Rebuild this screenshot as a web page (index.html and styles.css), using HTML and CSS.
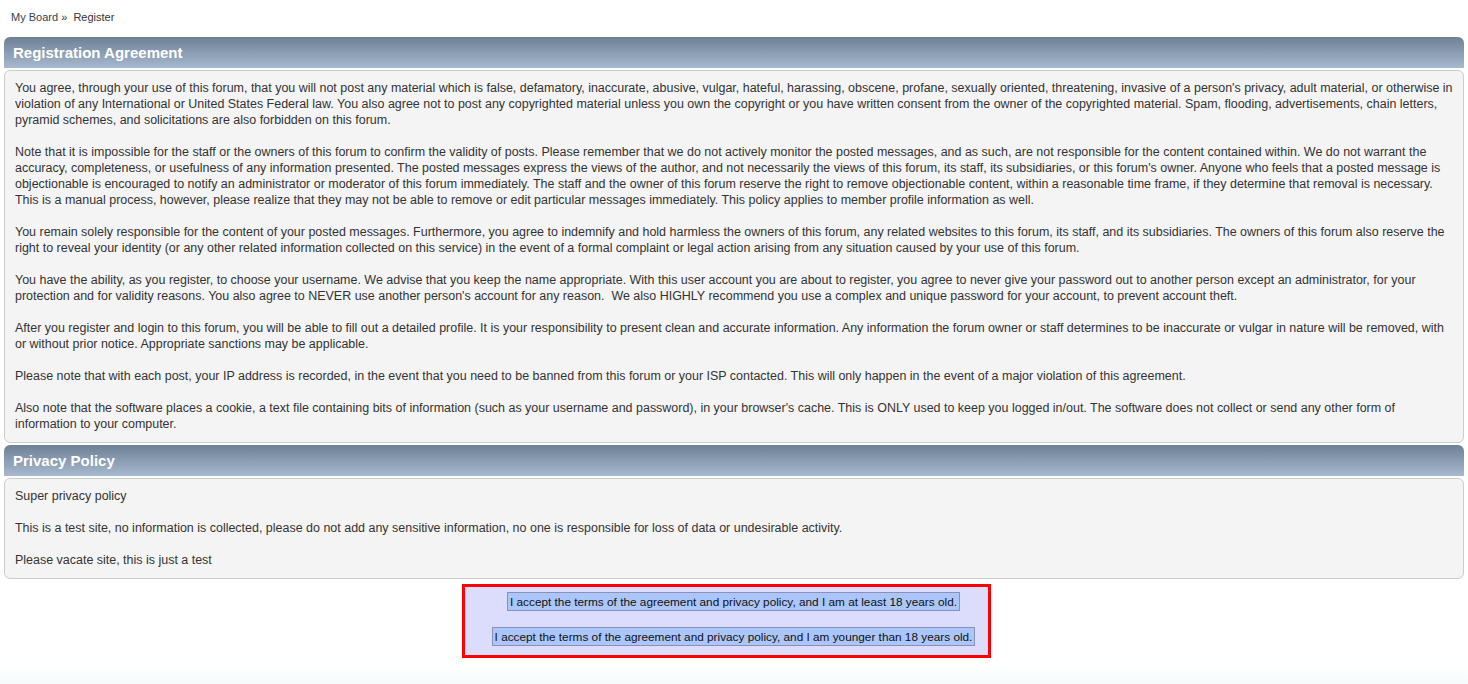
FILE: index.html
```html
<!doctype html>
<html>
  <head>
    <link rel="stylesheet" href="styles.css">
  </head>
  <body>
    <div class="navigation">
      <a href="#">My Board</a> &raquo;&nbsp; <span class="active">Register</span>
    </div>

    <div class="panel">
      <div class="thead">Registration Agreement</div>
      <div class="trow">
        You agree, through your use of this forum, that you will not post any material which is false, defamatory, inaccurate, abusive, vulgar, hateful, harassing, obscene, profane, sexually oriented, threatening, invasive of a person's privacy, adult material, or otherwise in violation of any International or United States Federal law. You also agree not to post any copyrighted material unless you own the copyright or you have written consent from the owner of the copyrighted material. Spam, flooding, advertisements, chain letters, pyramid schemes, and solicitations are also forbidden on this forum.<br><br>
        Note that it is impossible for the staff or the owners of this forum to confirm the validity of posts. Please remember that we do not actively monitor the posted messages, and as such, are not responsible for the content contained within. We do not warrant the accuracy, completeness, or usefulness of any information presented. The posted messages express the views of the author, and not necessarily the views of this forum, its staff, its subsidiaries, or this forum's owner. Anyone who feels that a posted message is objectionable is encouraged to notify an administrator or moderator of this forum immediately. The staff and the owner of this forum reserve the right to remove objectionable content, within a reasonable time frame, if they determine that removal is necessary. This is a manual process, however, please realize that they may not be able to remove or edit particular messages immediately. This policy applies to member profile information as well.<br><br>
        You remain solely responsible for the content of your posted messages. Furthermore, you agree to indemnify and hold harmless the owners of this forum, any related websites to this forum, its staff, and its subsidiaries. The owners of this forum also reserve the right to reveal your identity (or any other related information collected on this service) in the event of a formal complaint or legal action arising from any situation caused by your use of this forum.<br><br>
        You have the ability, as you register, to choose your username. We advise that you keep the name appropriate. With this user account you are about to register, you agree to never give your password out to another person except an administrator, for your protection and for validity reasons. You also agree to NEVER use another person's account for any reason.&nbsp; We also HIGHLY recommend you use a complex and unique password for your account, to prevent account theft.<br><br>
        After you register and login to this forum, you will be able to fill out a detailed profile. It is your responsibility to present clean and accurate information. Any information the forum owner or staff determines to be inaccurate or vulgar in nature will be removed, with or without prior notice. Appropriate sanctions may be applicable.<br><br>
        Please note that with each post, your IP address is recorded, in the event that you need to be banned from this forum or your ISP contacted. This will only happen in the event of a major violation of this agreement.<br><br>
        Also note that the software places a cookie, a text file containing bits of information (such as your username and password), in your browser's cache. This is ONLY used to keep you logged in/out. The software does not collect or send any other form of information to your computer.
      </div>
    </div>

    <div class="panel">
      <div class="thead">Privacy Policy</div>
      <div class="trow">
        Super privacy policy<br><br>
        This is a test site, no information is collected, please do not add any sensitive information, no one is responsible for loss of data or undesirable activity.<br><br>
        Please vacate site, this is just a test
      </div>
    </div>

    <div class="agree">
      <form class="agree-form">
        <input type="submit" class="button" value="I accept the terms of the agreement and privacy policy, and I am at least 18 years old.">
        <input type="submit" class="button" value="I accept the terms of the agreement and privacy policy, and I am younger than 18 years old.">
      </form>
    </div>
  </body>
</html>
```

FILE: styles.css
```css
html {
  min-height: 100%;
  background: linear-gradient(#fff 660px, #f8fbfb 684px);
}

body {
  margin: 0;
  padding: 0 4px;
  font-family: "Liberation Sans", Arial, sans-serif;
  font-size: 12.47px;
  color: #333;
}

.navigation {
  font-size: 11px;
  padding: 11px 0 0 7px;
  height: 37px;
  box-sizing: border-box;
  color: #333;
}

.navigation a {
  color: #334455;
  text-decoration: none;
}

.panel {
  margin-bottom: 2px;
}

.thead {
  height: 31px;
  line-height: 31px;
  padding-left: 9px;
  background: linear-gradient(#6e8096, #a7b9cf);
  border-radius: 6px 6px 0 0;
  color: #fff;
  font-size: 15px;
  font-weight: bold;
}

.trow {
  margin-top: 2px;
  background: #f4f4f4;
  border: 1px solid #cccccc;
  border-radius: 6px;
  padding: 9px 10px 10px 10px;
  line-height: 16px;
}

.agree {
  display: flex;
  justify-content: center;
  padding: 3px 0 0 0;
}

.agree-form {
  margin-right: 15px;
  width: 509px;
  border: 3px solid #ff0000;
  background: #dcdcfc;
  display: flex;
  flex-direction: column;
  align-items: center;
  gap: 16px;
  padding: 5px 0 9px 14px;
}

.button {
  font-family: "Liberation Sans", Arial, sans-serif;
  font-size: 11.8px;
  height: 19px;
  padding: 0 2px;
  background: #abc6fa;
  border: 1px solid #8d90b4;
  color: #111;
  border-radius: 0;
}
```
